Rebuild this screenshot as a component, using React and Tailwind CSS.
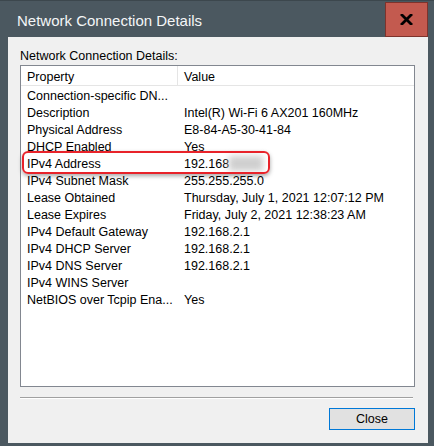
import React from "react";

const rows = [
  ["Connection-specific DN...", ""],
  ["Description", "Intel(R) Wi-Fi 6 AX201 160MHz"],
  ["Physical Address", "E8-84-A5-30-41-84"],
  ["DHCP Enabled", "Yes"],
  ["IPv4 Address", "192.168"],
  ["IPv4 Subnet Mask", "255.255.255.0"],
  ["Lease Obtained", "Thursday, July 1, 2021 12:07:12 PM"],
  ["Lease Expires", "Friday, July 2, 2021 12:38:23 AM"],
  ["IPv4 Default Gateway", "192.168.2.1"],
  ["IPv4 DHCP Server", "192.168.2.1"],
  ["IPv4 DNS Server", "192.168.2.1"],
  ["IPv4 WINS Server", ""],
  ["NetBIOS over Tcpip Ena...", "Yes"],
];

export default function App() {
  return (
    <div
      className="relative w-[434px] h-[446px] bg-[#4b5860] flex flex-col border-t border-[#3c474d] overflow-hidden"
      style={{ fontFamily: '"Liberation Sans", Arial, sans-serif' }}
    >
      {/* title bar */}
      <div className="h-[36px] flex items-start">
        <div className="flex-1 pl-[17px] pt-[11px] text-[15px] leading-[18px] text-[#f4f6f7]">
          Network Connection Details
        </div>
        <div className="mt-[1px] mr-[6px] w-[43px] h-[35px] bg-[#c35a4f] border border-[#7d332c] flex items-center justify-center">
          <svg width="13" height="11" viewBox="0 0 13 11">
            <path d="M2 1 L11 10 M11 1 L2 10" stroke="#000" strokeWidth="2.8" strokeLinecap="square" />
          </svg>
        </div>
      </div>

      {/* panel */}
      <div className="flex-1 ml-[8px] mr-[6px] mb-[3px] bg-[#f0f0f0] flex flex-col pl-[12px] pr-[13px] pt-[12px] text-[12.5px] text-black">
        <div className="h-[15px] leading-[15px]">Network Connection Details:</div>
        <div className="mt-[1px] h-[322px] border border-[#828790] bg-white flex flex-col">
          <div className="h-[20px] flex border-b border-[#e5e5e5]">
            <div className="w-[157px] border-r border-[#e5e5e5] pl-[6px] pt-[2px] leading-[18px]">Property</div>
            <div className="flex-1 pl-[6px] pt-[2px] leading-[18px]">Value</div>
          </div>
          <div className="h-[2px]"></div>
          {rows.map(([p, v]) => (
            <div key={p} className="h-[17px] flex leading-[17px] whitespace-nowrap">
              <div className="w-[157px] pl-[6px]">{p}</div>
              <div className="flex-1 pl-[6px]">{v}</div>
            </div>
          ))}
        </div>
        <div className="mt-[10px] h-[2px] border-t border-[#a0a0a0] border-b border-b-white mr-[2px]"></div>
        <div className="mt-[9px] flex justify-end">
          <div className="w-[86px] h-[22px] border border-[#0078d7] bg-[#e1e1e1] flex items-center justify-center">
            Close
          </div>
        </div>
      </div>

      {/* blurred part of IP */}
      <div className="absolute left-[229px] top-[155px] w-[34px] h-[15px] bg-[#cfcfcf] blur-[3px]"></div>
      {/* red highlight */}
      <div className="absolute left-[22px] top-[150px] w-[248px] h-[23px] rounded-[6px] border-2 border-[#e8232a] shadow-[0_2px_4px_rgba(0,0,0,0.35)]"></div>
    </div>
  );
}
